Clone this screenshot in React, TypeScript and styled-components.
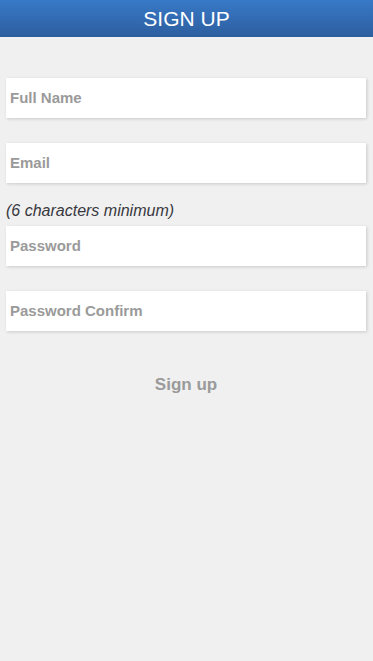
import styled, { createGlobalStyle } from "styled-components";

const GlobalStyle = createGlobalStyle`
  html, body {
    margin: 0;
    padding: 0;
    background-color: #f0f0f0;
    font-family: "Liberation Sans", Arial, sans-serif;
  }
`;

const Page = styled.div`
  min-height: 661px;
  background-color: #f0f0f0;
`;

const Header = styled.header`
  height: 37px;
  display: flex;
  align-items: center;
  justify-content: center;
  background: linear-gradient(to bottom, #3879c7, #2d5e9f);
  color: #ffffff;
  font-size: 21px;
`;

const Form = styled.form`
  display: flex;
  flex-direction: column;
  padding: 41px 7px 0 6px;
`;

const Field = styled.input<{ $gap?: number }>`
  box-sizing: border-box;
  height: 40px;
  width: 100%;
  border: none;
  outline: none;
  background: #ffffff;
  box-shadow: 1px 1px 3px rgba(0, 0, 0, 0.16);
  padding: 0 4px 2px;
  margin-bottom: ${(p) => p.$gap ?? 25}px;
  font-family: "Liberation Sans", Arial, sans-serif;
  font-size: 15px;
  font-weight: bold;
  color: #555;

  &::placeholder {
    color: #9a9a9a;
    opacity: 1;
  }
`;

const Hint = styled.div`
  font-size: 16px;
  font-style: italic;
  color: #383840;
  line-height: 20px;
  margin-bottom: 5px;
`;

const SubmitButton = styled.button`
  align-self: center;
  margin-top: 9px;
  height: 40px;
  padding: 0 20px;
  border: none;
  background: transparent;
  color: #9a9a9a;
  font-family: "Liberation Sans", Arial, sans-serif;
  font-size: 17px;
  font-weight: bold;
  cursor: pointer;
`;

export default function App() {
  return (
    <Page>
      <GlobalStyle />
      <Header>SIGN UP</Header>
      <Form onSubmit={(e) => e.preventDefault()}>
        <Field type="text" placeholder="Full Name" />
        <Field type="email" placeholder="Email" $gap={18} />
        <Hint>(6 characters minimum)</Hint>
        <Field type="password" placeholder="Password" />
        <Field type="password" placeholder="Password Confirm" />
        <SubmitButton type="submit">Sign up</SubmitButton>
      </Form>
    </Page>
  );
}
